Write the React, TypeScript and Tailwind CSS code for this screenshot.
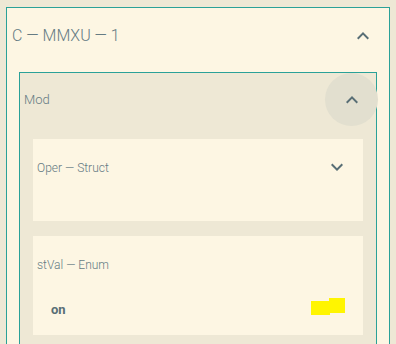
import React from 'react';

const Chevron = ({ up = true }: { up?: boolean }) => (
  <svg width="24" height="24" viewBox="0 0 24 24" className="text-[#586e75]">
    <path d={up ? 'M7.41 15.41 12 10.83l4.59 4.58L18 14l-6-6-6 6z' : 'M7.41 8.59 12 13.17l4.59-4.58L18 10l-6 6-6-6z'} fill="currentColor" />
  </svg>
);

const Highlight = () => (
  <svg width="36" height="20" viewBox="0 0 36 20">
    <path d="M1 4 L19 4 L19 1 L35 1 L35 16 L20 16 L20 18 L1 18 Z" fill="#fff500" />
  </svg>
);

export default function App() {
  return (
    <div className="min-h-[344px] h-[344px] overflow-hidden bg-[#eee8d5] pt-[7px] px-[6px] font-['Roboto',sans-serif] text-[#657b83]">
      <div className="border border-[#2aa198] border-b-0 bg-[#fdf6e3] min-h-[340px]">
        <div className="h-[56px] flex items-center justify-between pl-[5px] pr-[14px]">
          <span className="text-[16px] font-light">C — MMXU — 1</span>
          <Chevron />
        </div>
        <div className="mx-3 mt-2 border border-[#2aa198] border-b-0 bg-[#eee8d5] min-h-[280px]">
          <div className="h-[53px] flex items-center justify-between pl-1">
            <span className="text-[13px] font-light pt-[1px]">Mod</span>
            <div className="w-[53px] h-[53px] rounded-full bg-[#e2dfcf] flex items-center justify-center -mr-[2px]">
              <Chevron />
            </div>
          </div>
          <div className="px-[13px] pt-[13px] flex flex-col gap-[15px]">
            <div className="h-[82px] bg-[#fdf6e3] flex items-start justify-between pl-1 pr-[14px] pt-[19px]">
              <span className="text-[12px] font-light mt-[1px]">Oper — Struct</span>
              <div className="-mt-[3px]">
                <Chevron up={false} />
              </div>
            </div>
            <div className="h-[99px] bg-[#fdf6e3] pl-1 pt-[20px]">
              <div className="text-[12px] font-light">stVal — Enum</div>
              <div className="flex items-center justify-between pl-[14px] pr-[17px] mt-[26px]">
                <span className="text-[13px] font-bold text-[#586e75]">on</span>
                <div className="-mt-[5px]">
                  <Highlight />
                </div>
              </div>
            </div>
          </div>
        </div>
      </div>
    </div>
  );
}
